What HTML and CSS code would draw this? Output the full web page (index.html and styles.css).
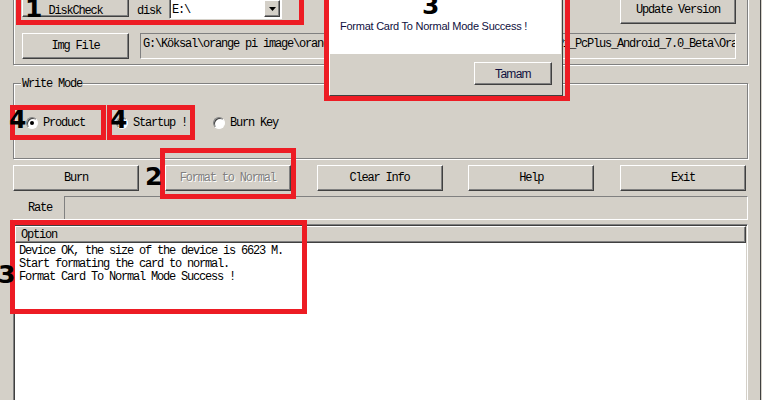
FILE: index.html
```html
<!DOCTYPE html>
<html lang="en">
<head>
    <meta charset="UTF-8">
    <meta name="viewport" content="width=device-width, initial-scale=1.0">
    <title>PhoenixCard</title>
    <link rel="stylesheet" href="styles.css">
</head>
<body>

<div class="window">

    <div class="group top">
        <div class="row">
            <div class="btn btn-disk">DiskCheck</div>
            <span class="lbl-disk">disk</span>
            <div class="combo">
                <span class="combo-text">E:\</span>
                <div class="btn combo-drop">
                    <svg width="7" height="4" viewBox="0 0 7 4"><polygon points="0,0 7,0 3.5,4" fill="#000"/></svg>
                </div>
            </div>
            <div class="btn btn-update">Update Version</div>
        </div>
        <div class="row row-img">
            <div class="btn btn-img">Img File</div>
            <div class="path">G:\Köksal\orange pi image\orange pi pc plus\Android 7.0 images\OrangePi_PcPlus_Android_7.0_Beta\OrangePi_PcPlus_Android_7.0_Beta.img</div>
        </div>
    </div>

    <fieldset class="group mode">
        <legend>Write Mode</legend>
        <div class="radios">
            <label class="opt opt-1"><span class="radio on"></span>Product</label>
            <label class="opt opt-2"><span class="radio"></span>Startup !</label>
            <label class="opt"><span class="radio"></span>Burn Key</label>
        </div>
    </fieldset>

    <div class="actions">
        <div class="btn btn-act">Burn</div>
        <div class="btn btn-act disabled">Format to Normal</div>
        <div class="btn btn-act">Clear Info</div>
        <div class="btn btn-act">Help</div>
        <div class="btn btn-act">Exit</div>
    </div>

    <div class="rate">
        <span class="rate-label">Rate</span>
        <div class="rate-bar"></div>
    </div>

    <div class="list">
        <div class="list-head">Option</div>
        <div class="list-body">
            <div>Device OK, the size of the device is 6623 M.</div>
            <div>Start formating the card to normal.</div>
            <div>Format Card To Normal Mode Success !</div>
        </div>
    </div>

    <!-- message box -->
    <div class="dialog">
        <div class="dialog-msg">Format Card To Normal Mode Success !</div>
        <div class="dialog-foot">
            <div class="btn btn-ok">Tamam</div>
        </div>
    </div>

    <!-- red notes drawn over the screenshot -->
    <div class="mark mark-disk"></div>
    <div class="mark mark-dialog"></div>
    <div class="mark mark-product"></div>
    <div class="mark mark-startup"></div>
    <div class="mark mark-format"></div>
    <div class="mark mark-option"></div>

    <span class="num num-1">1</span>
    <span class="num num-3a">3</span>
    <span class="num num-4a">4</span>
    <span class="num num-4b">4</span>
    <span class="num num-2">2</span>
    <span class="num num-3b">3</span>

</div>

</body>
</html>
```

FILE: styles.css
```css
* {
    box-sizing: border-box;
}

html, body {
    margin: 0;
    height: 100%;
    overflow: hidden;
}

body {
    background-color: #d4d0c8;
    font-family: "Liberation Mono", monospace;
    font-size: 12px;
    letter-spacing: -1.2px;
    color: #000;
}

.window {
    position: relative;
    display: flow-root;
    width: 761px;
    height: 400px;
    padding-left: 13px;
    border-right: 1px solid #404040;
}

.btn {
    display: flex;
    align-items: center;
    justify-content: center;
    background-color: #d4d0c8;
    border: 1px solid;
    border-color: #fff #404040 #404040 #fff;
    box-shadow: inset -1px -1px 0 #808080;
    white-space: nowrap;
}

.group {
    width: 735px;
    border: 1px solid #808080;
    box-shadow: inset 1px 1px 0 #fff, 1px 1px 0 #fff;
}

/* top box */
.top {
    margin-top: -14px;
    padding: 4px 11px 5px 8px;
}

.row {
    display: flex;
    align-items: flex-start;
}

.btn-disk {
    width: 107px;
    height: 23px;
    margin-top: 3px;
    padding-top: 11px;
}

.lbl-disk {
    margin: 12px 0 0 8px;
    line-height: 16px;
}

.combo {
    display: flex;
    width: 113px;
    height: 21px;
    margin: 7px 0 0 8px;
    padding: 1px;
    background-color: #fff;
    border: 1px solid;
    border-color: #808080 #fff #fff #808080;
    box-shadow: inset 1px 1px 0 #404040;
}

.combo-text {
    align-self: flex-end;
    margin-left: 1px;
    line-height: 14px;
}

.combo-drop {
    width: 16px;
    margin-left: auto;
}

.btn-update {
    width: 116px;
    height: 26px;
    margin: 7px 0 0 auto;
    padding-bottom: 2px;
}

.row-img {
    margin-top: 9px;
}

.btn-img {
    width: 107px;
    height: 26px;
}

.path {
    width: 596px;
    height: 26px;
    margin-left: 11px;
    padding: 1px 0 0 2px;
    line-height: 18px;
    white-space: nowrap;
    overflow: hidden;
    border: 1px solid;
    border-color: #808080 #fff #fff #808080;
}

/* write mode */
.mode {
    margin: 10px 0 0;
    padding: 0;
    min-width: 0;
}

.mode legend {
    margin-left: 7px;
    padding: 2px 1px 0;
    line-height: 14px;
    background-color: #d4d0c8;
}

.radios {
    display: flex;
    align-items: center;
    height: 16px;
    margin: 24px 0 27px;
    padding-left: 12px;
}

.opt {
    display: flex;
    align-items: center;
    gap: 5px;
}

.opt-1 {
    width: 90px;
}

.opt-2 {
    width: 97px;
}

.radio {
    display: inline-flex;
    align-items: center;
    justify-content: center;
    width: 12px;
    height: 12px;
    border-radius: 50%;
    background-color: #fff;
    border: 1px solid;
    border-color: #808080 #fff #fff #808080;
    box-shadow: inset 1px 1px 0 #404040;
}

.radio.on::after {
    content: "";
    width: 4px;
    height: 4px;
    border-radius: 50%;
    background-color: #000;
}

/* buttons */
.actions {
    display: flex;
    justify-content: space-between;
    width: 733px;
    margin-top: 6px;
}

.btn-act {
    width: 126px;
    height: 26px;
}

.disabled {
    color: #808080;
    text-shadow: 1px 1px 0 #fff;
}

/* rate */
.rate {
    display: flex;
    width: 735px;
    height: 24px;
    margin-top: 5px;
    border-bottom: 1px solid #fff;
}

.rate-label {
    width: 51px;
    padding: 1px 0 0 15px;
    line-height: 22px;
}

.rate-bar {
    flex: 1;
    border-top: 1px solid #808080;
    border-left: 1px solid #808080;
    border-right: 1px solid #fff;
}

/* option list */
.list {
    width: 735px;
    height: 200px;
    margin-top: 4px;
    padding: 1px;
    background-color: #fff;
    border: 1px solid;
    border-color: #808080 #fff #fff #808080;
    box-shadow: inset 1px 1px 0 #404040, inset -1px -1px 0 #d4d0c8;
}

.list-head {
    height: 17px;
    padding: 1px 0 0 5px;
    line-height: 14px;
    background-color: #d4d0c8;
    border: 1px solid;
    border-color: #fff #404040 #404040 #fff;
    box-shadow: inset -1px -1px 0 #808080;
}

.list-body {
    padding: 2px 0 0 4px;
    line-height: 13px;
}

/* message box */
.dialog {
    position: absolute;
    left: 329px;
    top: -40px;
    width: 234px;
    height: 136px;
    background-color: #d4d0c8;
    border: 1px solid;
    border-color: #d4d0c8 #404040 #404040 #fff;
    font-family: "Liberation Sans", Arial, sans-serif;
    font-size: 11px;
}

.dialog-msg {
    height: 93px;
    margin-right: 1px;
    padding: 58px 0 0 10px;
    line-height: 14px;
    letter-spacing: -0.25px;
    color: #101040;
    background-color: #fff;
}

.dialog-foot {
    display: flex;
    justify-content: flex-end;
    padding: 8px 10px 0 0;
}

.btn-ok {
    width: 78px;
    height: 23px;
    font-size: 12px;
    letter-spacing: -0.7px;
    color: #101040;
}

/* annotations */
.mark {
    position: absolute;
    border: 5px solid #ed1c24;
}

.mark-disk {
    left: 16px;
    top: -10px;
    width: 288px;
    height: 35px;
}

.mark-dialog {
    left: 324px;
    top: -10px;
    width: 246px;
    height: 111px;
}

.mark-product {
    left: 10px;
    top: 105px;
    width: 96px;
    height: 35px;
}

.mark-startup {
    left: 107px;
    top: 105px;
    width: 88px;
    height: 35px;
}

.mark-format {
    left: 160px;
    top: 148px;
    width: 136px;
    height: 51px;
}

.mark-option {
    left: 10px;
    top: 220px;
    width: 297px;
    height: 94px;
}

.num {
    position: absolute;
    font-family: "DejaVu Sans", sans-serif;
    font-weight: bold;
    font-size: 25px;
    line-height: 25px;
    letter-spacing: 0;
    color: #000;
}

.num-1 { left: 25px; top: -4px; }
.num-3a { left: 422px; top: -7px; }
.num-4a { left: 9px; top: 107px; }
.num-4b { left: 110px; top: 107px; }
.num-2 { left: 145px; top: 164px; }
.num-3b { left: -2px; top: 262px; }
```
